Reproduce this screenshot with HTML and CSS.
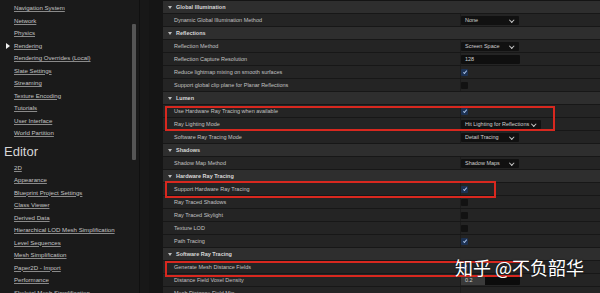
FILE: index.html
```html
<!DOCTYPE html>
<html lang="en">
<head>
    <meta charset="UTF-8">
    <meta name="viewport" content="width=device-width, initial-scale=1.0">
    <title>Project Settings</title>
    <link rel="stylesheet" href="styles.css">
</head>
<body>
    <div class="sidebar">
        <ul class="nav">
            <li><a>Navigation System</a></li>
            <li><a>Network</a></li>
            <li><a>Physics</a></li>
            <li class="current"><a>Rendering</a></li>
            <li><a>Rendering Overrides (Local)</a></li>
            <li><a>Slate Settings</a></li>
            <li><a>Streaming</a></li>
            <li><a>Texture Encoding</a></li>
            <li><a>Tutorials</a></li>
            <li><a>User Interface</a></li>
            <li><a>World Partition</a></li>
        </ul>
        <h2>Editor</h2>
        <ul class="nav">
            <li><a>2D</a></li>
            <li><a>Appearance</a></li>
            <li><a>Blueprint Project Settings</a></li>
            <li><a>Class Viewer</a></li>
            <li><a>Derived Data</a></li>
            <li><a>Hierarchical LOD Mesh Simplification</a></li>
            <li><a>Level Sequences</a></li>
            <li><a>Mesh Simplification</a></li>
            <li><a>Paper2D - Import</a></li>
            <li><a>Performance</a></li>
            <li><a>Skeletal Mesh Simplification</a></li>
        </ul>
        <div class="scroll-thumb"></div>
    </div>
    <div class="gutter"></div>

    <div class="panel">
        <div class="section">Global Illumination</div>
        <div class="row"><span class="label">Dynamic Global Illumination Method</span><span class="value"><span class="combo">None</span></span></div>

        <div class="section">Reflections</div>
        <div class="row"><span class="label">Reflection Method</span><span class="value"><span class="combo">Screen Space</span></span></div>
        <div class="row"><span class="label">Reflection Capture Resolution</span><span class="value"><span class="field">128</span></span></div>
        <div class="row"><span class="label">Reduce lightmap mixing on smooth surfaces</span><span class="value"><span class="check on"></span></span></div>
        <div class="row"><span class="label">Support global clip plane for Planar Reflections</span><span class="value"><span class="check"></span></span></div>

        <div class="section">Lumen</div>
        <div class="row"><span class="label">Use Hardware Ray Tracing when available</span><span class="value"><span class="check on"></span></span></div>
        <div class="row"><span class="label">Ray Lighting Mode</span><span class="value"><span class="combo wide">Hit Lighting for Reflections</span></span></div>
        <div class="row"><span class="label">Software Ray Tracing Mode</span><span class="value"><span class="combo">Detail Tracing</span></span></div>

        <div class="section">Shadows</div>
        <div class="row"><span class="label">Shadow Map Method</span><span class="value"><span class="combo">Shadow Maps</span></span></div>

        <div class="section">Hardware Ray Tracing</div>
        <div class="row"><span class="label">Support Hardware Ray Tracing</span><span class="value"><span class="check on"></span></span></div>
        <div class="row"><span class="label">Ray Traced Shadows</span><span class="value"><span class="check"></span></span></div>
        <div class="row"><span class="label">Ray Traced Skylight</span><span class="value"><span class="check"></span></span></div>
        <div class="row"><span class="label">Texture LOD</span><span class="value"><span class="check"></span></span></div>
        <div class="row"><span class="label">Path Tracing</span><span class="value"><span class="check on"></span></span></div>

        <div class="section">Software Ray Tracing</div>
        <div class="row"><span class="label">Generate Mesh Distance Fields</span><span class="value"><span class="check on"></span></span></div>
        <div class="row"><span class="label">Distance Field Voxel Density</span><span class="value"><span class="slider"><span class="fill" style="width: 40%">0.2</span></span></span></div>
        <div class="row"><span class="label">Mesh Distance Field Mip</span><span class="value"></span></div>

        <!-- highlight boxes -->
        <div class="mark mark-lumen"></div>
        <div class="mark mark-hwrt"></div>
        <div class="mark mark-sdf"></div>
    </div>

    <div class="watermark">知乎 @不负韶华</div>
</body>
</html>
```

FILE: styles.css
```css
body {
    margin: 0;
    width: 600px;
    height: 293px;
    overflow: hidden;
    display: flex;
    background-color: #141414;
    font-family: "Liberation Sans", Arial, sans-serif;
    color: #c4c4c4;
}
.sidebar {
    position: relative;
    width: 139px;
    flex-shrink: 0;
    background-color: #1a1a1a;
    padding-top: 2px;
}
.nav {
    list-style: none;
    margin: 0;
    padding: 0;
}
.nav li {
    position: relative;
    height: 12.5px;
    line-height: 12.5px;
    padding-left: 14px;
    font-size: 6.1px;
    white-space: nowrap;
}
.nav a {
    color: #c4c4c4;
    text-decoration: underline;
    text-decoration-color: #8a8a8a;
}
.nav li.current::before {
    content: "";
    position: absolute;
    left: 6px;
    top: 3.5px;
    border-left: 4px solid #f0f0f0;
    border-top: 3px solid transparent;
    border-bottom: 3px solid transparent;
}
.sidebar h2 {
    margin: 0;
    height: 22px;
    line-height: 24px;
    padding-left: 4px;
    font-size: 13px;
    font-weight: normal;
    color: #d6d6d6;
}
.scroll-thumb {
    position: absolute;
    left: 132px;
    top: 24px;
    width: 4px;
    height: 136px;
    background-color: #555;
    border-radius: 1px;
}
.gutter {
    width: 23px;
    flex-shrink: 0;
    background-color: #151515;
    border-left: 1px solid #101010;
    box-shadow: inset 9px 0 0 #181818;
}
.panel {
    position: relative;
    flex: 1;
    padding-top: 1px;
    font-size: 5.5px;
}
.section,
.row {
    height: 12px;
    border-bottom: 1px solid #171717;
    display: flex;
    align-items: center;
    white-space: nowrap;
}
.section {
    background-color: #2e2e2e;
    padding-left: 5px;
    font-weight: bold;
    color: #d8d8d8;
}
.section::before {
    content: "";
    margin-right: 4px;
    border-top: 3px solid #bcbcbc;
    border-left: 2.5px solid transparent;
    border-right: 2.5px solid transparent;
}
.row {
    background-color: #242424;
}
.label {
    width: 286px;
    padding-left: 11px;
    height: 100%;
    display: flex;
    align-items: center;
    color: #c2c2c2;
    border-right: 1px solid #1c1c1c;
}
.value {
    padding-left: 0;
    display: flex;
    align-items: center;
}
.combo,
.field,
.slider {
    position: relative;
    box-sizing: border-box;
    height: 9px;
    line-height: 9px;
    width: 58px;
    padding-left: 4px;
    background-color: #111;
    border-radius: 1px;
    color: #cfcfcf;
}
.combo.wide {
    width: 80px;
}
.combo::after {
    content: "";
    position: absolute;
    right: 6px;
    top: 2px;
    width: 2.5px;
    height: 2.5px;
    border-right: 1px solid #c8c8c8;
    border-bottom: 1px solid #c8c8c8;
    transform: rotate(45deg);
}
.field {
    width: 59px;
    background-color: #0f0f0f;
}
.slider {
    padding-left: 0;
    width: 59px;
    background-color: #0c0c0c;
}
.fill {
    display: block;
    height: 100%;
    padding-left: 4px;
    box-sizing: border-box;
    background-color: #3a3a3a;
    color: #d0d0d0;
}
.check {
    position: relative;
    width: 7px;
    height: 7px;
    background-color: #121212;
    border-radius: 1px;
}
.check.on {
    background-color: #1c3152;
}
.check.on::after {
    content: "";
    position: absolute;
    left: 2.6px;
    top: 1.2px;
    width: 1.3px;
    height: 3px;
    border-right: 1px solid #a9c0e6;
    border-bottom: 1px solid #a9c0e6;
    transform: rotate(40deg);
}
.mark {
    position: absolute;
    border: 2px solid #d8281f;
}
.mark-lumen {
    left: 2px;
    top: 106px;
    width: 386px;
    height: 21px;
}
.mark-hwrt {
    left: 2px;
    top: 181px;
    width: 327px;
    height: 13px;
}
.mark-sdf {
    left: 2px;
    top: 261px;
    width: 353px;
    height: 12px;
}
.watermark {
    position: absolute;
    left: 455px;
    top: 253px;
    font-family: "Noto Sans CJK SC", sans-serif;
    font-size: 18px;
    line-height: 28px;
    color: #ffffff;
    text-shadow: 0 0 2px rgba(0, 0, 0, 0.6);
    white-space: nowrap;
}
```
